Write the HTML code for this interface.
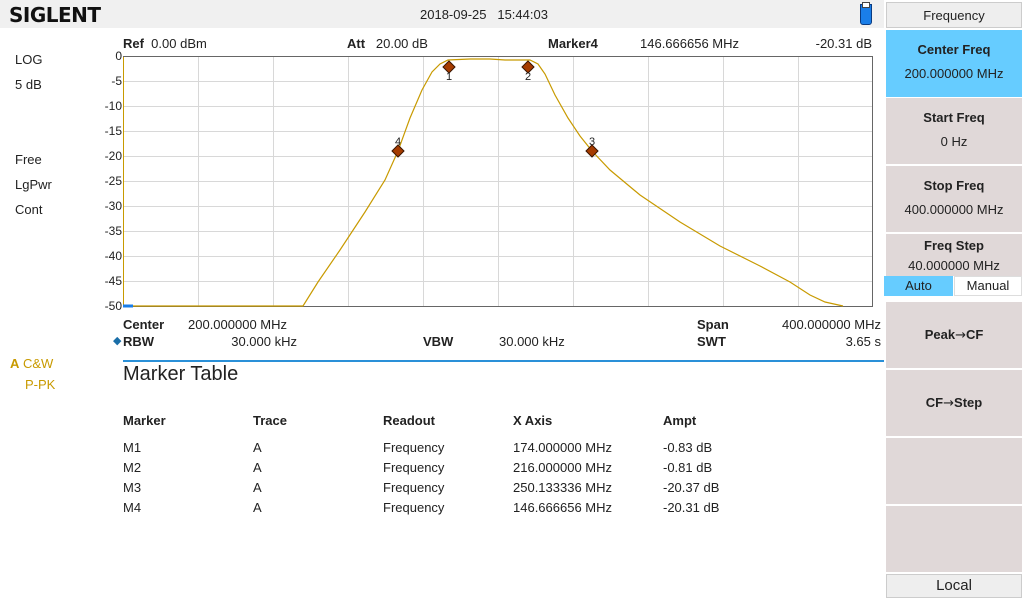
<!DOCTYPE html>
<html><head><meta charset="utf-8"><style>
*{margin:0;padding:0;box-sizing:border-box}
body{width:1024px;height:600px;background:#fff;font-family:"Liberation Sans","DejaVu Sans",sans-serif;font-size:13px;color:#222;position:relative;overflow:hidden}
.a{position:absolute;white-space:nowrap}
.b{font-weight:bold}
.r{text-align:right}
.btn{position:absolute;left:886px;width:136px;background:#e0d8d8;text-align:center}
.btn .t{font-weight:bold;font-size:13px}
.ar{font-family:"DejaVu Sans",sans-serif;font-weight:normal}
.yl{color:#c89a00}
</style></head><body>
<div class="a" style="left:0;top:0;width:884px;height:28px;background:#f0f0f0"></div>
<div class="a b" style="left:9px;top:3px;font-size:20px;letter-spacing:-0.5px;color:#111;font-family:'DejaVu Sans',sans-serif">SIGLENT</div>
<div class="a" style="left:420px;top:7px">2018-09-25&nbsp;&nbsp;&nbsp;15:44:03</div>
<div class="a" style="left:860px;top:4px;width:12px;height:21px;background:#1a7ee8;border:1px solid #0a3b80;border-radius:0 0 3px 3px"></div>
<div class="a" style="left:862px;top:2px;width:8px;height:6px;border:1px solid #444;background:#fff"></div>

<div class="a" style="left:886px;top:2px;width:136px;height:26px;background:#eeeeee;border:1px solid #ccc;text-align:center;line-height:26px">Frequency</div>
<div class="btn" style="top:30px;height:67px;background:#66ccff"><div class="t" style="margin-top:12px">Center Freq</div><div style="margin-top:9px">200.000000 MHz</div></div>
<div class="btn" style="top:98px;height:66px"><div class="t" style="margin-top:12px">Start Freq</div><div style="margin-top:9px">0 Hz</div></div>
<div class="btn" style="top:166px;height:66px"><div class="t" style="margin-top:12px">Stop Freq</div><div style="margin-top:9px">400.000000 MHz</div></div>
<div class="btn" style="top:234px;height:42px"><div class="t" style="margin-top:4px">Freq Step</div><div style="margin-top:5px">40.000000 MHz</div></div>
<div class="a" style="left:884px;top:276px;width:69px;height:20px;background:#66ccff;text-align:center;line-height:20px">Auto</div>
<div class="a" style="left:954px;top:276px;width:68px;height:20px;background:#fff;border:1px solid #ddd;text-align:center;line-height:18px">Manual</div>
<div class="btn" style="top:302px;height:66px;line-height:66px"><span class="t">Peak<span class="ar">→</span>CF</span></div>
<div class="btn" style="top:370px;height:66px;line-height:66px"><span class="t">CF<span class="ar">→</span>Step</span></div>
<div class="btn" style="top:438px;height:66px"></div>
<div class="btn" style="top:506px;height:66px"></div>
<div class="a" style="left:886px;top:574px;width:136px;height:24px;background:#eeeeee;border:1px solid #ccc;text-align:center;line-height:22px;font-size:15px">Local</div>

<div class="a" style="left:15px;top:52px">LOG</div>
<div class="a" style="left:15px;top:77px">5 dB</div>
<div class="a" style="left:15px;top:152px">Free</div>
<div class="a" style="left:15px;top:177px">LgPwr</div>
<div class="a" style="left:15px;top:202px">Cont</div>
<div class="a yl" style="left:10px;top:356px"><b>A</b>&nbsp;C&amp;W</div>
<div class="a yl" style="left:25px;top:377px">P-PK</div>

<div class="a" style="left:123px;top:36px"><b>Ref</b>&nbsp; 0.00 dBm</div>
<div class="a" style="left:347px;top:36px"><b>Att</b>&nbsp;&nbsp; 20.00 dB</div>
<div class="a b" style="left:548px;top:36px">Marker4</div>
<div class="a" style="left:640px;top:36px">146.666656 MHz</div>
<div class="a r" style="left:760px;top:36px;width:112px">-20.31 dB</div>

<svg class="a" style="left:0;top:0" width="884" height="320">
<g stroke="#d8d8d8" stroke-width="1">
<path d="M198.5 57V306M273.5 57V306M348.5 57V306M423.5 57V306M498.5 57V306M573.5 57V306M648.5 57V306M723.5 57V306M798.5 57V306"/>
<path d="M123 81.5H873M123 106.5H873M123 131.5H873M123 156.5H873M123 181.5H873M123 206.5H873M123 231.5H873M123 256.5H873M123 281.5H873"/>
</g>
<path d="M123 56.5H872.5V306.5H123" fill="none" stroke="#666" stroke-width="1"/>
<g font-size="12" fill="#222" text-anchor="end" font-family="Liberation Sans,sans-serif">
<text x="122" y="60">0</text><text x="122" y="85">-5</text><text x="122" y="110">-10</text><text x="122" y="135">-15</text><text x="122" y="160">-20</text><text x="122" y="185">-25</text><text x="122" y="210">-30</text><text x="122" y="235">-35</text><text x="122" y="260">-40</text><text x="122" y="285">-45</text><text x="122" y="310">-50</text>
</g>
<path d="M123.5 57V306" stroke="#c89a00" stroke-width="1"/>
<path d="M123 306H303L318 282L340 250L365 212L385 180L398 151L410 118L422 90L432 72L440 64L448 60L470 59L490 59L505 60L530 60L538 64L545 74L555 95L568 118L580 136L592 151L610 170L640 195L680 222L720 246L760 266L790 282L810 295L825 302L843 306" fill="none" stroke="#c89a00" stroke-width="1.2"/>
<path d="M123 306H133" stroke="#1a7ee8" stroke-width="3"/>
<g fill="#a63c00" stroke="#3a1500" stroke-width="1">
<path d="M449 61l6 6-6 6-6-6z"/><path d="M528 61l6 6-6 6-6-6z"/><path d="M592 145l6 6-6 6-6-6z"/><path d="M398 145l6 6-6 6-6-6z"/>
</g>
<g font-size="11" fill="#222" text-anchor="middle" font-family="Liberation Sans,sans-serif">
<text x="449" y="80">1</text><text x="528" y="80">2</text><text x="592" y="145">3</text><text x="398" y="145">4</text>
</g>
</svg>

<div class="a b" style="left:123px;top:317px">Center</div>
<div class="a" style="left:188px;top:317px">200.000000 MHz</div>
<div class="a b" style="left:697px;top:317px">Span</div>
<div class="a r" style="left:740px;top:317px;width:141px">400.000000 MHz</div>
<div class="a" style="left:113px;top:334px;color:#1a6ea8;font-size:11px">◆</div>
<div class="a b" style="left:123px;top:334px">RBW</div>
<div class="a r" style="left:180px;top:334px;width:117px">30.000 kHz</div>
<div class="a b" style="left:423px;top:334px">VBW</div>
<div class="a" style="left:499px;top:334px">30.000 kHz</div>
<div class="a b" style="left:697px;top:334px">SWT</div>
<div class="a r" style="left:760px;top:334px;width:121px">3.65 s</div>
<div class="a" style="left:123px;top:360px;width:761px;height:2px;background:#2a90d8"></div>
<div class="a" style="left:123px;top:363px;font-size:20px">Marker Table</div>

<div class="a b" style="left:123px;top:413px">Marker</div>
<div class="a b" style="left:253px;top:413px">Trace</div>
<div class="a b" style="left:383px;top:413px">Readout</div>
<div class="a b" style="left:513px;top:413px">X Axis</div>
<div class="a b" style="left:663px;top:413px">Ampt</div>
<div class="a" style="left:123px;top:438px;line-height:20px">M1<br>M2<br>M3<br>M4</div>
<div class="a" style="left:253px;top:438px;line-height:20px">A<br>A<br>A<br>A</div>
<div class="a" style="left:383px;top:438px;line-height:20px">Frequency<br>Frequency<br>Frequency<br>Frequency</div>
<div class="a" style="left:513px;top:438px;line-height:20px">174.000000 MHz<br>216.000000 MHz<br>250.133336 MHz<br>146.666656 MHz</div>
<div class="a" style="left:663px;top:438px;line-height:20px">-0.83 dB<br>-0.81 dB<br>-20.37 dB<br>-20.31 dB</div>
</body></html>
